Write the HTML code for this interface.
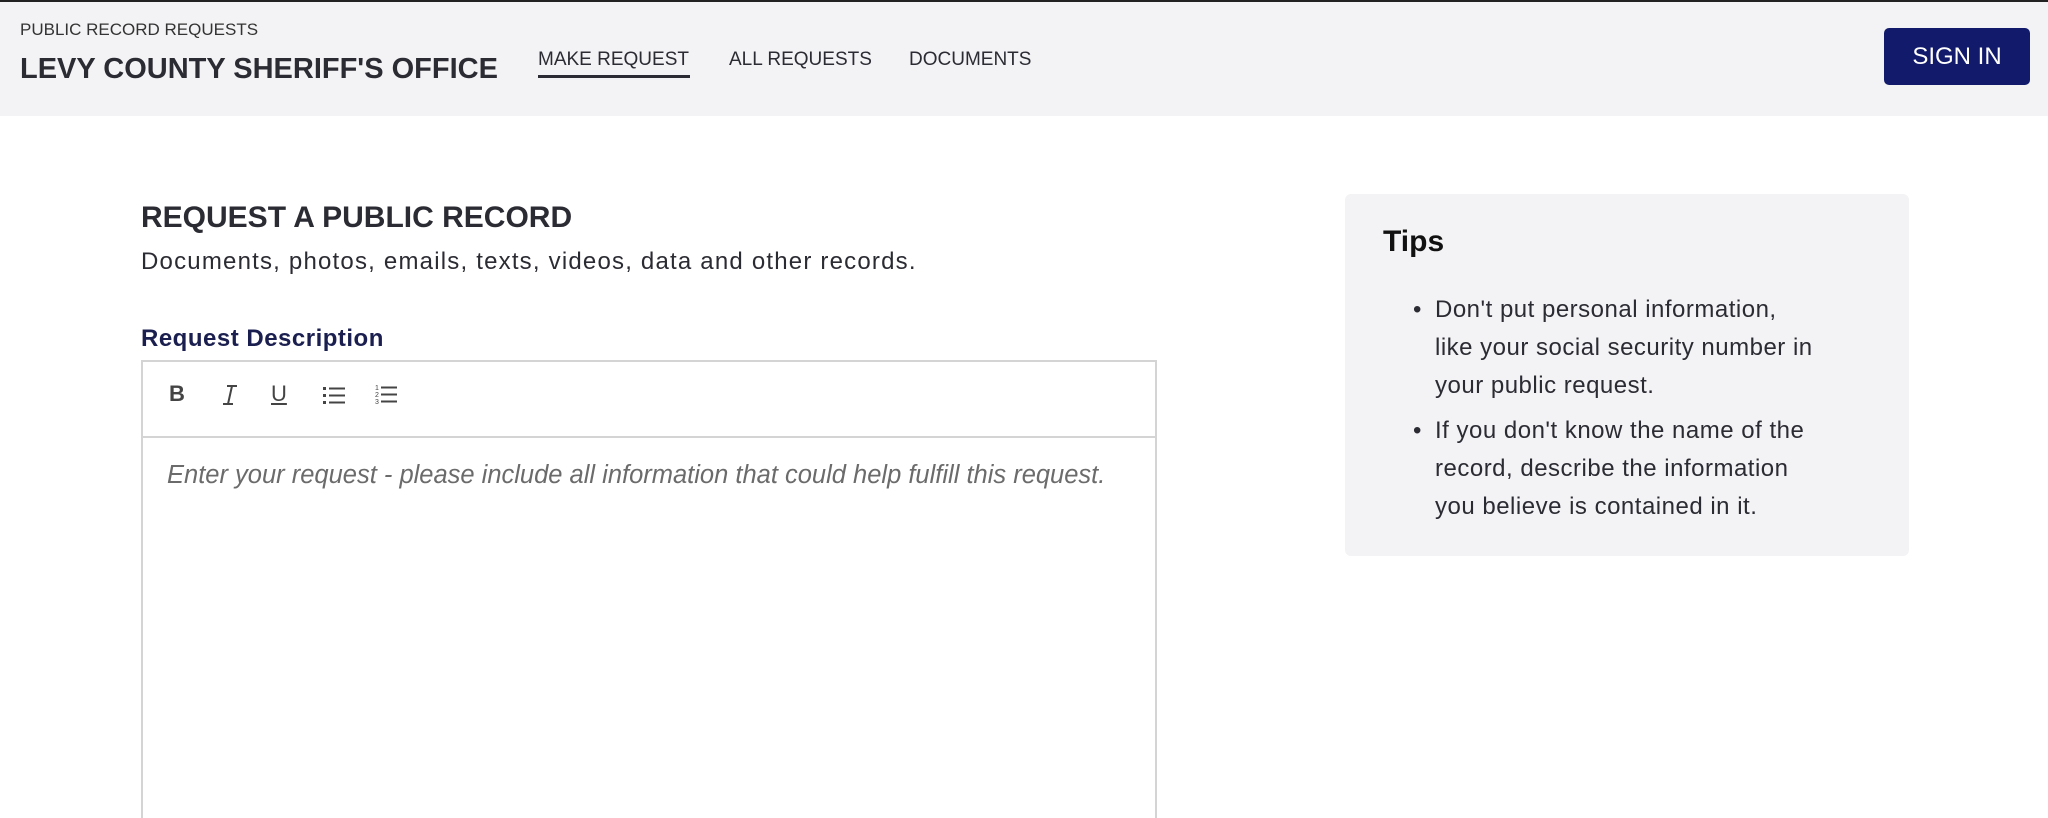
<!DOCTYPE html>
<html style="width:2048px;height:818px;overflow:hidden"><head><meta charset="utf-8">
<style>
*{margin:0;padding:0;box-sizing:border-box}
body{width:2048px;height:818px;overflow:hidden;background:#fff;font-family:"Liberation Sans","DejaVu Sans",sans-serif;color:#2b2b33;position:relative}
.hdr{position:absolute;left:0;top:0;width:2048px;height:116px;background:#f3f3f5;border-top:2px solid #222}
.abs{position:absolute;white-space:nowrap}
.btn{position:absolute;left:1884px;top:26px;width:146px;height:57px;background:#121b6b;border-radius:5px;color:#fff;font-size:24px;text-align:center;line-height:57px}
.tips{position:absolute;left:1345px;top:194px;width:564px;height:362px;background:#f3f3f5;border-radius:6px}
.box{position:absolute;left:141px;top:360px;width:1016px;height:458px;border:2px solid #d4d4d4;border-bottom:none}
.sep{position:absolute;left:0;top:74px;width:100%;height:2px;background:#d4d4d4}
</style></head><body>
<div class="hdr">
  <div class="abs" style="left:20px;top:18px;font-size:17px;color:#333">PUBLIC RECORD REQUESTS</div>
  <div class="abs" style="left:20px;top:51px;font-size:29px;font-weight:600;color:#2b2b33">LEVY COUNTY SHERIFF'S OFFICE</div>
  <div class="abs" style="left:538px;top:47px;font-size:19px;color:#2b2b33">MAKE REQUEST</div>
  <div class="abs" style="left:538px;top:73px;width:152px;height:3px;background:#2b2b33"></div>
  <div class="abs" style="left:729px;top:47px;font-size:19px;color:#2b2b33">ALL REQUESTS</div>
  <div class="abs" style="left:909px;top:47px;font-size:19px;color:#2b2b33">DOCUMENTS</div>
  <div class="btn">SIGN IN</div>
</div>
<div class="abs" style="left:141px;top:201px;font-size:30px;font-weight:bold;color:#2b2b33">REQUEST A PUBLIC RECORD</div>
<div class="abs" style="left:141px;top:248px;font-size:24px;letter-spacing:1.2px;color:#2b2b33">Documents, photos, emails, texts, videos, data and other records.</div>
<div class="abs" style="left:141px;top:325px;font-size:24px;letter-spacing:0.5px;font-weight:bold;color:#1a1f4f">Request Description</div>
<div class="box">
  <div class="sep"></div>
  <div class="abs" style="left:26px;top:19px;font-size:22px;font-weight:bold;color:#444">B</div>
  <svg class="abs" style="left:79px;top:23px" width="16" height="20" viewBox="0 0 16 20"><g stroke="#444" stroke-width="2" fill="none"><path d="M5 1h10M1 19h10M10 1L6 19"/></g></svg>
  <div class="abs" style="left:128px;top:19px;font-size:22px;text-decoration:underline;color:#444">U</div>
  <svg class="abs" style="left:180px;top:22px" width="24" height="22" viewBox="0 0 24 22"><g fill="#444"><rect x="0" y="3" width="3" height="3"/><rect x="0" y="10" width="3" height="3"/><rect x="0" y="17" width="3" height="3"/><rect x="6" y="3.5" width="16" height="2"/><rect x="6" y="10.5" width="16" height="2"/><rect x="6" y="17.5" width="16" height="2"/></g></svg>
  <svg class="abs" style="left:232px;top:20px" width="24" height="24" viewBox="0 0 24 24"><g fill="#444"><text x="0" y="8" font-size="7" font-family="Liberation Sans">1</text><text x="0" y="15" font-size="7" font-family="Liberation Sans">2</text><text x="0" y="22" font-size="7" font-family="Liberation Sans">3</text><rect x="6" y="4.5" width="16" height="2"/><rect x="6" y="11.5" width="16" height="2"/><rect x="6" y="18.5" width="16" height="2"/></g></svg>
  <div class="abs" style="left:24px;top:99px;font-size:25.5px;font-style:italic;color:#6b6b6b">Enter your request - please include all information that could help fulfill this request.</div>
</div>
<div class="tips">
  <div class="abs" style="left:38px;top:31px;font-size:30px;font-weight:600;color:#111">Tips</div>
  <div class="abs" style="left:90px;top:97px;font-size:24px;letter-spacing:0.5px;line-height:38px;color:#2b2b33;white-space:normal;width:460px">
    <div style="position:relative">Don't put personal information,<br>like your social security number in<br>your public request.<span style="position:absolute;left:-22px;top:0">•</span></div>
    <div style="position:relative;margin-top:7px">If you don't know the name of the<br>record, describe the information<br>you believe is contained in it.<span style="position:absolute;left:-22px;top:0">•</span></div>
  </div>
</div>
</body></html>
